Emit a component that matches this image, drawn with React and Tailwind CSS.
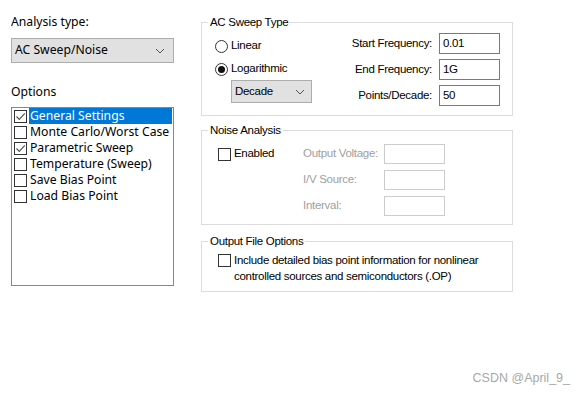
import React from 'react';

const Check = ({ checked }) => (
    <span className="w-[13px] h-[13px] border border-[#333] bg-white flex items-center justify-center shrink-0">
        {checked && (
            <svg width="11" height="11" viewBox="0 0 11 11">
                <path d="M1.5 5.5 L4.3 8.3 L9.8 2.3" fill="none" stroke="#555" strokeWidth="1.2" />
            </svg>
        )}
    </span>
);

const Radio = ({ checked }) => (
    <span className="w-[13px] h-[13px] rounded-full border border-[#333] bg-white flex items-center justify-center shrink-0">
        {checked && <span className="w-[7px] h-[7px] rounded-full bg-[#111]" />}
    </span>
);

const Chevron = () => (
    <svg width="10" height="6" viewBox="0 0 10 6">
        <path d="M1 1 L5 5 L9 1" fill="none" stroke="#555" strokeWidth="1" />
    </svg>
);

const Group = ({ title, className, children }) => (
    <fieldset className={`border border-[#dcdcdc] px-0 ${className}`}>
        <legend className="ml-[6px] px-[2px] text-[11.5px] leading-[14px] tracking-[-0.3px] text-[#000]">{title}</legend>
        {children}
    </fieldset>
);

const options = [
    { name: 'General Settings', checked: true, active: true },
    { name: 'Monte Carlo/Worst Case', checked: false },
    { name: 'Parametric Sweep', checked: true },
    { name: 'Temperature (Sweep)', checked: false },
    { name: 'Save Bias Point', checked: false },
    { name: 'Load Bias Point', checked: false }
];

const App = () => {
    return (
        <div className="w-[585px] h-[395px] bg-white flex relative overflow-hidden font-['Noto_Sans',sans-serif] text-black">
            {/* left column */}
            <div className="ml-[11px] w-[163px] flex flex-col text-[12.2px]">
                <div className="mt-[13px] leading-[18px]">Analysis type:</div>
                <div className="mt-[7px] h-[25px] bg-[#e1e1e1] border border-[#adadad] flex items-center justify-between pl-[3px] pr-[8px]">
                    <span>AC Sweep/Noise</span>
                    <Chevron />
                </div>
                <div className="mt-[20px] leading-[18px]">Options</div>
                <div className="mt-[6px] h-[179px] border border-[#828790] pl-[2px] pr-[1px] leading-[16px]">
                    {options.map((o) => (
                        <div key={o.name} className="h-[16px] flex items-center whitespace-nowrap overflow-hidden">
                            <Check checked={o.checked} />
                            <span className={`ml-[2px] pl-[1px] flex-1 h-[16px] flex items-center overflow-hidden ${o.active ? 'bg-[#0078d7] text-white' : ''}`}>{o.name}</span>
                        </div>
                    ))}
                </div>
            </div>

            {/* right column */}
            <div className="ml-[27px] w-[312px] flex flex-col font-['Liberation_Sans',sans-serif] text-[11.5px] tracking-[-0.3px]">
                <Group title="AC Sweep Type" className="mt-[15px] h-[101px]">
                    <div className="flex">
                        <div className="ml-[13px] flex flex-col">
                            <div className="mt-[9px] h-[16px] flex items-center gap-[3px]"><Radio /><span>Linear</span></div>
                            <div className="mt-[7px] h-[16px] flex items-center gap-[3px]"><Radio checked /><span>Logarithmic</span></div>
                            <div className="mt-[3px] ml-[16px] w-[81px] h-[23px] bg-[#e1e1e1] border border-[#adadad] flex items-center justify-between pl-[3px] pr-[6px]">
                                <span>Decade</span>
                                <Chevron />
                            </div>
                        </div>
                        <div className="ml-auto mr-[12px] flex flex-col gap-[5px] mt-[4px]">
                            {[['Start Frequency:', '0.01'], ['End Frequency:', '1G'], ['Points/Decade:', '50']].map(([l, v]) => (
                                <div key={l} className="flex items-center justify-end">
                                    <span className="mr-[7px]">{l}</span>
                                    <span className="w-[61px] h-[21px] border border-[#7a7a7a] flex items-center pl-[3px]">{v}</span>
                                </div>
                            ))}
                        </div>
                    </div>
                </Group>

                <Group title="Noise Analysis" className="mt-[7px] h-[102px]">
                    <div className="flex">
                        <div className="ml-[16px] mt-[9px] h-[16px] flex items-center gap-[3px] self-start"><Check /><span>Enabled</span></div>
                        <div className="ml-[29px] flex flex-col gap-[6px] mt-[7px] text-[#a0a0a0]">
                            {['Output Voltage:', 'I/V Source:', 'Interval:'].map((l) => (
                                <div key={l} className="flex items-center whitespace-nowrap">
                                    <span className="w-[81px]">{l}</span>
                                    <span className="w-[61px] h-[20px] border border-[#cccccc]" />
                                </div>
                            ))}
                        </div>
                    </div>
                </Group>

                <Group title="Output File Options" className="mt-[9px] h-[58px]">
                    <div className="ml-[16px] mt-[4px] flex items-start gap-[3px] leading-[16px]">
                        <span className="mt-[2px]"><Check /></span>
                        <span>Include detailed bias point information for nonlinear<br />controlled sources and semiconductors (.OP)</span>
                    </div>
                </Group>
            </div>

            <div className="absolute right-[15px] bottom-[7px] text-[12.5px] text-[#a8a8a8] font-['Liberation_Sans',sans-serif]">CSDN @April_9_</div>
        </div>
    );
};

export default App;
